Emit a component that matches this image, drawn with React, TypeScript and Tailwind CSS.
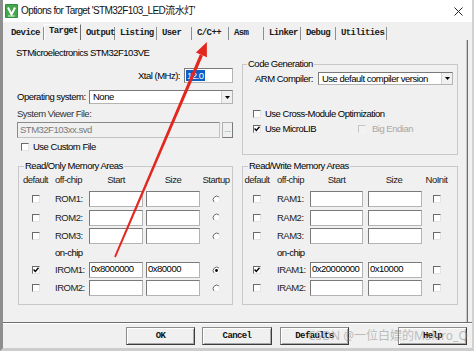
import React from "react";

const UI = "font-['Liberation_Sans',Arial,'Noto_Sans_CJK_SC',sans-serif]";
const MONO = "font-['Liberation_Mono',monospace] font-bold text-[9px] tracking-[-0.6px]";

const tabs = [
  { label: "Device", w: "w-[38px]" },
  { label: "Target", w: "w-[37px]", active: true },
  { label: "Output", w: "w-[34px]" },
  { label: "Listing", w: "w-[42px]" },
  { label: "User", w: "w-[35px]" },
  { label: "C/C++", w: "w-[37px]" },
  { label: "Asm", w: "w-[35px]" },
  { label: "Linker", w: "w-[37px]" },
  { label: "Debug", w: "w-[35px]" },
  { label: "Utilities", w: "w-[51px]" },
];

function Check({ checked = false, disabled = false }: { checked?: boolean; disabled?: boolean }) {
  return (
    <span
      className={`flex w-[8px] h-[8px] shrink-0 border ${
        disabled
          ? "border-t-[#c4c4c4] border-l-[#c4c4c4] border-b-[#f4f4f4] border-r-[#f4f4f4] bg-[#f2f2f2]"
          : "border-t-[#6a6a6a] border-l-[#6a6a6a] border-b-[#e4e4e4] border-r-[#e4e4e4] bg-white"
      }`}
    >
      {checked && (
        <svg width="6" height="6" viewBox="0 0 6 6">
          <path d="M0.6 2.6 L2.3 4.4 L5.5 0.8" stroke="#000" strokeWidth="1.4" fill="none" />
        </svg>
      )}
    </span>
  );
}

function Radio({ on = false }: { on?: boolean }) {
  return (
    <svg width="9" height="9" viewBox="0 0 9 9">
      <circle cx="4.5" cy="4.5" r="3.5" fill="#fff" />
      <path d="M2.03 6.97 A3.5 3.5 0 0 1 6.97 2.03" stroke="#6a6a6a" strokeWidth="1" fill="none" />
      <path d="M6.97 2.03 A3.5 3.5 0 0 1 2.03 6.97" stroke="#e6e6e6" strokeWidth="1" fill="none" />
      {on && <circle cx="4.5" cy="4.5" r="1.4" fill="#000" />}
    </svg>
  );
}

function Field({ value = "", w }: { value?: string; w: string }) {
  return (
    <div
      className={`${w} h-[16px] bg-white border border-[#b4b4b4] border-t-[#7a7a7a] border-l-[#7a7a7a] pl-[1px] leading-[12px] text-black overflow-hidden whitespace-nowrap`}
    >
      {value}
    </div>
  );
}

function Arrow() {
  return (
    <span className="w-[11px] h-full shrink-0 flex items-center justify-center bg-[#f0f0f0] border-l border-[#d0d0d0]">
      <svg width="5" height="3" viewBox="0 0 5 3">
        <path d="M0 0 H5 L2.5 3 Z" fill="#000" />
      </svg>
    </span>
  );
}

function Button({ label, w }: { label: string; w: string }) {
  return (
    <div
      className={`${w} h-[18px] flex items-center justify-center bg-[#f0f0f0] border border-[#8c8c8c] border-b-[#3c3c3c] border-r-[#3c3c3c] shadow-[inset_1px_1px_0_#fff,inset_-1px_-1px_0_#a8a8a8] ${MONO} text-[#111]`}
    >
      {label}
    </div>
  );
}

type Row = { label: string; h: string; check?: boolean; start?: string; size?: string; on?: boolean; chip?: boolean };

const roRows: Row[] = [
  { label: "ROM1:", h: "h-[18px]" },
  { label: "ROM2:", h: "h-[19px]" },
  { label: "ROM3:", h: "h-[18px]" },
  { label: "on-chip", h: "h-[16px]", chip: true },
  { label: "IROM1:", h: "h-[18px]", check: true, start: "0x8000000", size: "0x80000", on: true },
  { label: "IROM2:", h: "h-[18px]" },
];

const rwRows: Row[] = [
  { label: "RAM1:", h: "h-[18px]" },
  { label: "RAM2:", h: "h-[19px]" },
  { label: "RAM3:", h: "h-[18px]" },
  { label: "on-chip", h: "h-[16px]", chip: true },
  { label: "IRAM1:", h: "h-[18px]", check: true, start: "0x20000000", size: "0x10000" },
  { label: "IRAM2:", h: "h-[18px]" },
];

function MemoryGroup({ title, rw }: { title: string; rw?: boolean }) {
  const cols = rw ? "grid-cols-[28px_39px_53px_59px_1fr]" : "grid-cols-[33px_37px_54px_57px_1fr]";
  const lpad = rw ? "pl-[6px]" : "pl-[3px]";
  const rows = rw ? rwRows : roRows;
  return (
    <fieldset className={`${rw ? "w-[216px]" : "w-[215px] ml-[1px]"} h-[145px] border border-[#c8c8c8]`}>
      <legend className="ml-[5px] px-[1px] leading-[12px]">{title}</legend>
      <div className={`grid ${cols} mt-[2px] h-[12px] items-center text-[#222]`}>
        <span className="text-center whitespace-nowrap">default</span>
        <span className={`${lpad} whitespace-nowrap`}>off-chip</span>
        <span className="text-center">Start</span>
        <span className="text-center pl-[3px]">Size</span>
        <span className={`text-center ${rw ? "pr-[6px]" : ""}`}>{rw ? "NoInit" : "Startup"}</span>
      </div>
      <div className="mt-[4px] flex flex-col">
        {rows.map((r) =>
          r.chip ? (
            <div key={r.label} className={`grid ${cols} ${r.h} items-center`}>
              <span />
              <span className={`${lpad} whitespace-nowrap`}>{r.label}</span>
            </div>
          ) : (
            <div key={r.label} className={`grid ${cols} ${r.h} items-center`}>
              <span className="flex justify-center">
                <Check checked={r.check} />
              </span>
              <span className={`${lpad} whitespace-nowrap text-[#222]`}>{r.label}</span>
              <Field value={r.start} w={rw ? "w-[53px]" : "w-[54px]"} />
              <span className="flex justify-end">
                <Field value={r.size} w="w-[54px]" />
              </span>
              <span className={`flex justify-center ${rw ? "pr-[6px]" : ""}`}>
                {rw ? <Check /> : <Radio on={r.on} />}
              </span>
            </div>
          )
        )}
      </div>
    </fieldset>
  );
}

export default function App() {
  return (
    <div className={`relative w-[474px] h-[351px] overflow-hidden ${UI} text-[9.5px] tracking-[-0.5px] leading-[12px] text-black`}>
      <div className="w-[474px] h-[351px] flex flex-col bg-[#f0f0f0] border-l-[3px] border-l-[#8e8e8e] border-r-2 border-r-[#d2d2d2] border-b-[3px] border-b-[#cdcdcd]">
        {/* title bar */}
        <div className="h-[22px] shrink-0 bg-white flex items-center pl-[2px] pr-[9px]">
          <svg width="13" height="14" viewBox="0 0 13 14">
            <rect x="0" y="0" width="13" height="14" rx="1" fill="#2f8f3a" />
            <rect x="1" y="1" width="11" height="12" fill="#43a84b" />
            <path d="M3 3.5 L6.5 10.5 L10 3.5" stroke="#fff" strokeWidth="2" fill="none" />
            <rect x="3" y="11.5" width="7" height="1" fill="#d9f0d9" />
          </svg>
          <span className="ml-[3px] text-[10px] tracking-[-0.6px] leading-[14px] text-[#111] whitespace-nowrap">
            Options for Target 'STM32F103_LED流水灯'
          </span>
          <svg className="ml-auto" width="9" height="9" viewBox="0 0 9 9">
            <path d="M0.5 0.5 L8.5 8.5 M8.5 0.5 L0.5 8.5" stroke="#222" strokeWidth="1" />
          </svg>
        </div>

        {/* tabs */}
        <div className={`h-[18px] shrink-0 flex items-end pl-[3px] ${MONO} text-[#1a1a1a]`}>
          {tabs.map((t) =>
            t.active ? (
              <div
                key={t.label}
                className={`${t.w} h-[16px] border-t border-l border-t-white border-l-white border-r border-r-[#6e6e6e] pl-[4px] leading-[13px] whitespace-nowrap`}
              >
                {t.label}
              </div>
            ) : (
              <div
                key={t.label}
                className={`${t.w} h-[13px] border-r border-r-[#8f8f8f] pl-[5px] leading-[12px] whitespace-nowrap`}
              >
                {t.label}
              </div>
            )
          )}
        </div>

        {/* panel */}
        <div className="w-[465px] h-[282px] shrink-0 border-r border-r-[#6e6e6e] shadow-[inset_-1px_0_0_#c8c8c8] pl-[14px] pt-[7px] flex flex-col">
          <div className="flex gap-[9px] h-[108px]">
            <div className="w-[216px] flex flex-col">
              <div className="h-[12px] -ml-px whitespace-nowrap">STMicroelectronics STM32F103VE</div>
              <div className="mt-[9px] h-[15px] flex items-center justify-end gap-[4px]">
                <span className="whitespace-nowrap">Xtal (MHz):</span>
                <div className="w-[49px] h-[15px] bg-white border border-[#b4b4b4] border-t-[#7a7a7a] border-l-[#7a7a7a] pl-[1px] flex items-center">
                  <span className="bg-[#0a5fc8] text-white px-[1px] leading-[11px]">12.0</span>
                </div>
              </div>
              <div className="mt-[7px] h-[14px] flex items-center">
                <span className="w-[72px] whitespace-nowrap">Operating system:</span>
                <div className="w-[144px] h-[14px] flex bg-white border border-[#b4b4b4] border-t-[#7a7a7a] border-l-[#7a7a7a]">
                  <span className="flex-1 pl-[3px] leading-[12px]">None</span>
                  <Arrow />
                </div>
              </div>
              <div className="mt-[4px] h-[12px] text-[#333] whitespace-nowrap">System Viewer File:</div>
              <div className="mt-[2px] h-[16px] flex gap-[2px]">
                <div className="w-[203px] h-[16px] bg-[#f0f0f0] border border-[#c2c2c2] border-t-[#8a8a8a] border-l-[#8a8a8a] pl-[2px] leading-[14px] text-[#7a7a7a]">
                  STM32F103xx.svd
                </div>
                <div className="w-[11px] h-[16px] bg-[#f0f0f0] border border-[#b0b0b0] border-b-[#7a7a7a] border-r-[#7a7a7a] text-[#9a9a9a] leading-[12px] text-center">
                  ...
                </div>
              </div>
              <div className="mt-[3px] h-[12px] flex items-center pl-[4px] gap-[4px]">
                <Check />
                <span className="whitespace-nowrap">Use Custom File</span>
              </div>
            </div>

            <div className="w-[216px] flex flex-col">
              <fieldset className="mt-[11px] h-[97px] border border-[#c8c8c8]">
                <legend className="ml-[4px] px-[1px] leading-[12px]">Code Generation</legend>
                <div className="mt-[2px] h-[13px] flex items-center">
                  <span className="w-[75px] pl-[12px] whitespace-nowrap">ARM Compiler:</span>
                  <div className="w-[135px] h-[13px] flex bg-white border border-[#b4b4b4] border-t-[#7a7a7a] border-l-[#7a7a7a]">
                    <span className="flex-1 pl-[3px] leading-[11px] whitespace-nowrap overflow-hidden">Use default compiler version</span>
                    <Arrow />
                  </div>
                </div>
                <div className="mt-[23px] h-[12px] flex items-center pl-[10px] gap-[4px]">
                  <Check />
                  <span className="whitespace-nowrap">Use Cross-Module Optimization</span>
                </div>
                <div className="mt-[3px] h-[12px] flex items-center pl-[10px]">
                  <div className="w-[105px] flex items-center gap-[4px]">
                    <Check checked />
                    <span className="whitespace-nowrap">Use MicroLIB</span>
                  </div>
                  <div className="flex items-center gap-[6px] text-[#a8a8a8]">
                    <Check disabled />
                    <span className="whitespace-nowrap">Big Endian</span>
                  </div>
                </div>
              </fieldset>
            </div>
          </div>

          <div className="mt-[5px] flex gap-[9px]">
            <MemoryGroup title="Read/Only Memory Areas" />
            <MemoryGroup title="Read/Write Memory Areas" rw />
          </div>
        </div>

        {/* separator */}
        <div className="h-[2px] shrink-0 border-t border-t-[#6f6f6f] border-b border-b-white" />

        {/* buttons */}
        <div className="mt-[3px] h-[18px] shrink-0 flex pl-[123px]">
          <Button label="OK" w="w-[69px]" />
          <div className="ml-[7px]">
            <Button label="Cancel" w="w-[70px]" />
          </div>
          <div className="ml-[8px]">
            <Button label="Defaults" w="w-[69px]" />
          </div>
          <div className="ml-[49px]">
            <Button label="Help" w="w-[69px]" />
          </div>
        </div>
      </div>

      {/* red annotation arrow */}
      <svg className="absolute left-0 top-0 pointer-events-none" width="474" height="351" viewBox="0 0 474 351">
        <polygon points="114.2,256.6 115.8,257.4 202.9,55.7 199.9,54.3" fill="#e3261e" />
        <polygon points="206.9,42 195.9,52.5 206.9,57.3" fill="#e3261e" />
      </svg>

      {/* watermark */}
      <div className="absolute left-[308px] top-[328px] text-[12px] tracking-normal leading-[15px] font-['Noto_Sans','Noto_Sans_CJK_SC',sans-serif] text-[rgba(140,140,140,0.55)] whitespace-nowrap pointer-events-none">
        CSDN @一位白嫖的Makiro_Q
      </div>
    </div>
  );
}
